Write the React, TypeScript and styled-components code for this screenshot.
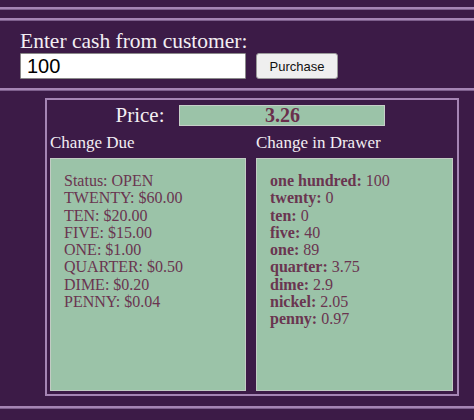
import React, { useState } from 'react';
import styled, { createGlobalStyle } from 'styled-components';

const GlobalStyle = createGlobalStyle`
    body {
        margin: 0;
        background: #3c1b47;
        font-family: "Liberation Serif", "DejaVu Serif", serif;
    }
`;

const Rule = styled.hr`
    margin: 0;
    border: none;
    height: 2px;
    background: #a585b4;
    border-bottom: 1px solid #7d5f8c;
`;

const Gap = styled.div`
    height: 8px;
`;

const Page = styled.div`
    padding-top: 7px;
    display: flex;
    flex-direction: column;
`;

const Entry = styled.section`
    padding: 8px 20px 9px 20px;
`;

const EntryLabel = styled.label`
    display: block;
    color: #f3eef3;
    font-size: 21.5px;
    line-height: 24px;
`;

const EntryRow = styled.div`
    display: flex;
    align-items: center;
    gap: 10px;
`;

const CashInput = styled.input`
    box-sizing: border-box;
    width: 226px;
    height: 26px;
    border: 1px solid #8a8a8a;
    border-radius: 1px;
    padding: 0 6px;
    font-family: "Liberation Sans", Arial, sans-serif;
    font-size: 20px;
    color: #000;
    outline: none;
`;

const PurchaseButton = styled.button`
    box-sizing: border-box;
    width: 82px;
    height: 26px;
    background: #efefef;
    border: 1px solid #9a9a9a;
    border-radius: 3px;
    font-family: "Liberation Sans", Arial, sans-serif;
    font-size: 13px;
    color: #111;
`;

const Frame = styled.main`
    box-sizing: border-box;
    margin: 7px 15px 10px 45px;
    height: 298px;
    border: 2px solid #a585b4;
    padding: 4px 4px 3px 3px;
    display: flex;
    flex-direction: column;
`;

const PriceRow = styled.div`
    display: flex;
    justify-content: center;
    align-items: center;
    gap: 15px;
    padding-right: 2px;
`;

const PriceLabel = styled.span`
    color: #f3eef3;
    font-size: 21px;
    line-height: 22px;
`;

const PriceBox = styled.div`
    box-sizing: border-box;
    width: 206px;
    height: 21px;
    background: #9bc3a8;
    border: 1px solid #c6cfc8;
    color: #6a2f4c;
    font-size: 20px;
    font-weight: bold;
    line-height: 19px;
    text-align: center;
`;

const Columns = styled.div`
    flex: 1;
    display: grid;
    grid-template-columns: 196px 197px;
    gap: 10px;
    margin-top: 7px;
`;

const Column = styled.div`
    display: flex;
    flex-direction: column;
`;

const ColumnTitle = styled.h2`
    margin: 0 0 5px 0;
    color: #f3eef3;
    font-size: 17px;
    font-weight: normal;
    line-height: 20px;
`;

const Panel = styled.div`
    box-sizing: border-box;
    flex: 1;
    background: #9bc3a8;
    border: 1px solid #c2cbc4;
    padding: 13px 13px;
    color: #6a3550;
    font-size: 16px;
    line-height: 17.3px;
`;

const Line = styled.div``;

const Key = styled.b``;

const changeDue = [
    'Status: OPEN',
    'TWENTY: $60.00',
    'TEN: $20.00',
    'FIVE: $15.00',
    'ONE: $1.00',
    'QUARTER: $0.50',
    'DIME: $0.20',
    'PENNY: $0.04',
];

const drawer: [string, string][] = [
    ['one hundred', '100'],
    ['twenty', '0'],
    ['ten', '0'],
    ['five', '40'],
    ['one', '89'],
    ['quarter', '3.75'],
    ['dime', '2.9'],
    ['nickel', '2.05'],
    ['penny', '0.97'],
];

const App: React.FC = () => {
    const [cash, setCash] = useState('100');

    return (
        <Page>
            <GlobalStyle />
            <Rule />
            <Gap />
            <Rule />
            <Entry>
                <EntryLabel htmlFor="cash">Enter cash from customer:</EntryLabel>
                <EntryRow>
                    <CashInput id="cash" value={cash} onChange={e => setCash(e.target.value)} />
                    <PurchaseButton>Purchase</PurchaseButton>
                </EntryRow>
            </Entry>
            <Rule />
            <Frame>
                <PriceRow>
                    <PriceLabel>Price:</PriceLabel>
                    <PriceBox>3.26</PriceBox>
                </PriceRow>
                <Columns>
                    <Column>
                        <ColumnTitle>Change Due</ColumnTitle>
                        <Panel>
                            {changeDue.map(line => <Line key={line}>{line}</Line>)}
                        </Panel>
                    </Column>
                    <Column>
                        <ColumnTitle>Change in Drawer</ColumnTitle>
                        <Panel>
                            {drawer.map(([k, v]) => (
                                <Line key={k}><Key>{k}:</Key> {v}</Line>
                            ))}
                        </Panel>
                    </Column>
                </Columns>
            </Frame>
            <Rule />
        </Page>
    );
}

export default App;
